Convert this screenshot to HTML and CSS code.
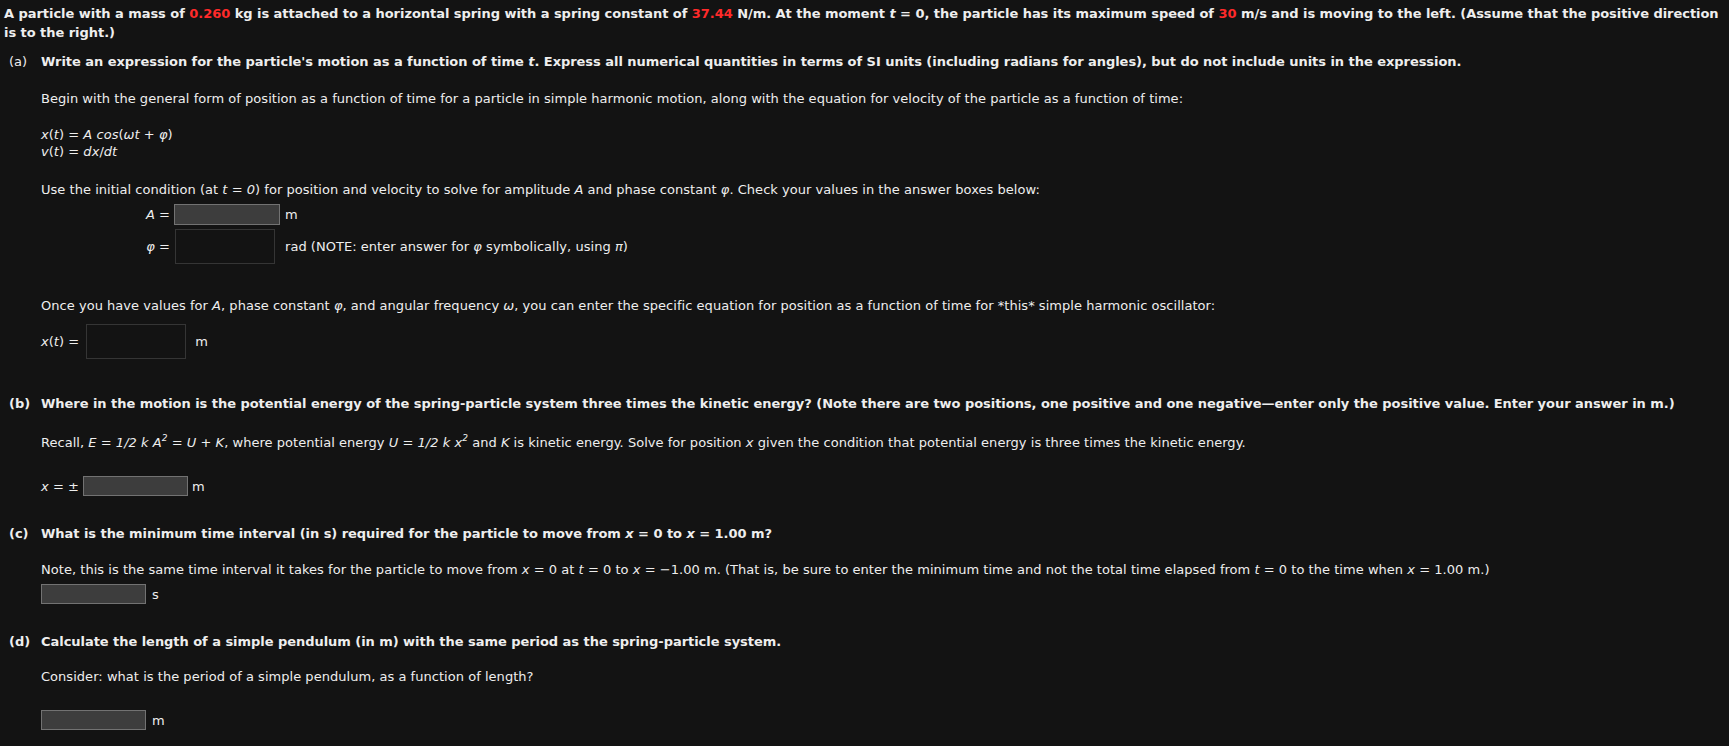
FILE: index.html
```html
<!DOCTYPE html>
<html>
<head>
<meta charset="utf-8">
<link rel="stylesheet" href="styles.css">
</head>
<body>
<div class="page">
  <p class="intro">A particle with a mass of <span class="red">0.260</span> kg is attached to a horizontal spring with a spring constant of <span class="red">37.44</span> N/m. At the moment <i>t</i> = 0, the particle has its maximum speed of <span class="red">30</span> m/s and is moving to the left. (Assume that the positive direction is to the right.)</p>

  <div class="part part-a">
    <div class="lbl lbl-normal">(a)</div>
    <div class="content">
      <p class="qtext">Write an expression for the particle's motion as a function of time <i>t</i>. Express all numerical quantities in terms of SI units (including radians for angles), but do not include units in the expression.</p>
      <p class="txt begin">Begin with the general form of position as a function of time for a particle in simple harmonic motion, along with the equation for velocity of the particle as a function of time:</p>
      <p class="eq"><i>x</i>(<i>t</i>) = <i>A</i> <i>cos</i>(<i>ωt</i> + <i>φ</i>)<br><i>v</i>(<i>t</i>) = <i>dx</i>/<i>dt</i></p>
      <p class="txt use">Use the initial condition (at <i>t</i> = <i>0</i>) for position and velocity to solve for amplitude <i>A</i> and phase constant <i>φ</i>. Check your values in the answer boxes below:</p>
      <div class="ansgrid">
        <span class="alabel"><i>A</i> =</span>
        <span class="box filled wA"></span>
        <span class="unit">m</span>
        <span class="alabel"><i>φ</i> =</span>
        <span class="box empty wphi"></span>
        <span class="unit">rad (NOTE: enter answer for <i>φ</i> symbolically, using <i>π</i>)</span>
      </div>
      <p class="txt once">Once you have values for <i>A</i>, phase constant <i>φ</i>, and angular frequency <i>ω</i>, you can enter the specific equation for position as a function of time for *this* simple harmonic oscillator:</p>
      <div class="row row-xt">
        <span class="rlabel rlabel-xt"><i>x</i>(<i>t</i>) =</span>
        <span class="box empty wxt"></span>
        <span class="unit u-xt">m</span>
      </div>
    </div>
  </div>

  <div class="part part-b">
    <div class="lbl">(b)</div>
    <div class="content">
      <p class="qtext">Where in the motion is the potential energy of the spring-particle system three times the kinetic energy? (Note there are two positions, one positive and one negative—enter only the positive value. Enter your answer in m.)</p>
      <p class="txt recall">Recall, <i>E</i> = <i>1/2 k A<sup>2</sup></i> = <i>U</i> + <i>K</i>, where potential energy <i>U</i> = <i>1/2 k x<sup>2</sup></i> and <i>K</i> is kinetic energy. Solve for position <i>x</i> given the condition that potential energy is three times the kinetic energy.</p>
      <div class="row row-xpm">
        <span class="rlabel"><i>x</i> = ±</span>
        <span class="box filled wsm"></span>
        <span class="unit u-sm">m</span>
      </div>
    </div>
  </div>

  <div class="part part-c">
    <div class="lbl">(c)</div>
    <div class="content">
      <p class="qtext">What is the minimum time interval (in s) required for the particle to move from <i>x</i> = 0 to <i>x</i> = 1.00 m?</p>
      <p class="txt note">Note, this is the same time interval it takes for the particle to move from <i>x</i> = 0 at <i>t</i> = 0 to <i>x</i> = −1.00 m. (That is, be sure to enter the minimum time and not the total time elapsed from <i>t</i> = 0 to the time when <i>x</i> = 1.00 m.)</p>
      <div class="row row-s">
        <span class="box filled wsm"></span>
        <span class="unit u-s">s</span>
      </div>
    </div>
  </div>

  <div class="part part-d">
    <div class="lbl">(d)</div>
    <div class="content">
      <p class="qtext">Calculate the length of a simple pendulum (in m) with the same period as the spring-particle system.</p>
      <p class="txt consider">Consider: what is the period of a simple pendulum, as a function of length?</p>
      <div class="row row-d">
        <span class="box filled wsm"></span>
        <span class="unit u-s">m</span>
      </div>
    </div>
  </div>
</div>
</body>
</html>
```

FILE: styles.css
```css
html, body {
  margin: 0;
  padding: 0;
  background: #131313;
}
body {
  color: #eeeeee;
  font-family: "DejaVu Sans", Verdana, sans-serif;
  font-size: 13px;
  letter-spacing: 0.035px;
}
.page {
  padding: 4px 0 0 4px;
}
p {
  margin: 0;
}
.intro {
  font-weight: bold;
  line-height: 19px;
  letter-spacing: -0.045px;
}
.red {
  color: #ff2a2a;
}
.part {
  display: flex;
  align-items: flex-start;
}
.lbl {
  width: 37px;
  padding-left: 5px;
  flex: none;
  box-sizing: border-box;
  font-weight: bold;
  line-height: 19px;
  letter-spacing: -0.045px;
}
.lbl-normal {
  font-weight: normal;
  letter-spacing: 0;
}
.content {
  flex: 1;
  min-width: 0;
  padding-right: 4px;
}
.qtext {
  font-weight: bold;
  line-height: 19px;
  letter-spacing: -0.045px;
}
.txt {
  line-height: 19px;
}
.eq {
  line-height: 17px;
  margin-top: 18px;
}
.part-a { margin-top: 10px; }
.begin { margin-top: 18px; }
.use { margin-top: 20px; }
.ansgrid {
  display: grid;
  grid-template-columns: 133px 106px auto;
  row-gap: 4px;
  align-items: center;
  margin-top: 5px;
}
.alabel {
  text-align: right;
  padding-right: 4px;
  box-sizing: border-box;
}
.box {
  display: block;
  box-sizing: border-box;
}
.filled {
  background: #3d3d3d;
  border: 1px solid #727272;
  height: 21px;
}
.empty {
  background: #131313;
  border: 1px solid #353535;
  height: 35px;
}
.wA { width: 106px; }
.wphi { width: 100px; margin-left: 1px; }
.wxt { width: 100px; }
.wsm { width: 105px; height: 20px; }
.unit {
  padding-left: 5px;
}
.once { margin-top: 32px; }
.row {
  display: flex;
  align-items: center;
}
.row-xt { margin-top: 9px; }
.rlabel { margin-right: 4px; }
.rlabel-xt { margin-right: 7px; }
.u-xt { padding-left: 9px; }
.part-b { margin-top: 35px; }
.recall { margin-top: 20px; }
sup {
  font-size: 9px;
  line-height: 0;
  vertical-align: 6px;
}
.row-xpm { margin-top: 24px; }
.u-sm { padding-left: 4px; }
.part-c { margin-top: 28px; }
.note { margin-top: 17px; }
.row-s { margin-top: 5px; }
.u-s { padding-left: 6px; }
.part-d { margin-top: 28px; }
.consider { margin-top: 16px; }
.row-d { margin-top: 24px; }
```
